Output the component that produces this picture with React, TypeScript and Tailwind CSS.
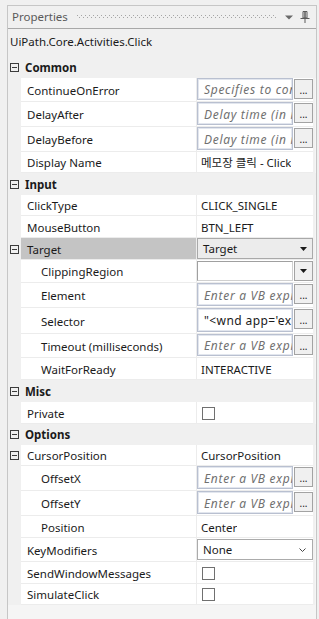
import type { ReactNode } from 'react'

const FONT = "font-['Noto_Sans','Noto_Sans_CJK_KR',sans-serif]"

function Expander() {
  return (
    <span className="relative block w-[9px] h-[9px] border border-[#3c3c3c]">
      <span className="absolute left-[1px] right-[1px] top-[3px] h-px bg-[#3c3c3c]" />
    </span>
  )
}

function Category({ label, h }: { label: string; h: string }) {
  return (
    <div className={`flex items-center bg-[#f0f0f0] ${h}`}>
      <div className="w-[13px] shrink-0 flex items-center justify-center">
        <Expander />
      </div>
      <span className="pl-[4px] pt-[1px] font-bold text-[#1a1a1a]">{label}</span>
    </div>
  )
}

type PropProps = {
  name: string
  h: string
  indent?: boolean
  expander?: boolean
  highlight?: boolean
  children?: ReactNode
}

function Prop({ name, h, indent, expander, highlight, children }: PropProps) {
  return (
    <div className={`flex ${h}`}>
      <div className="w-[13px] shrink-0 bg-[#f0f0f0] flex items-center justify-center">
        {expander && <Expander />}
      </div>
      <div
        className={`w-[175px] shrink-0 border-b border-[#ececec] flex items-center pt-[2px] overflow-hidden whitespace-nowrap ${
          indent ? 'pl-[20px]' : 'pl-[6px]'
        } ${highlight ? 'bg-[#c4c4c4]' : 'bg-white'}`}
      >
        {name}
      </div>
      <div className="w-[117px] shrink-0 bg-white border-b border-l border-[#ececec] flex items-stretch">
        {children}
      </div>
      <div className="w-[2px] shrink-0 bg-[#f0f0f0]" />
    </div>
  )
}

function Text({ children }: { children: ReactNode }) {
  return (
    <div className="flex items-center pl-[4px] pt-[2px] whitespace-nowrap overflow-hidden text-[#1a1a1a]">
      {children}
    </div>
  )
}

// editors only show the part of the text that fits, as in the grid
function Editor({ placeholder, value }: { placeholder?: string; value?: string }) {
  return (
    <div className="flex w-full pb-[1px]">
      <div
        className={`w-[96px] shrink-0 border border-[#b9c0d0] shadow-[inset_0_0_0_1px_#e2e6ee] bg-white flex items-center pl-[6px] pt-[2px] overflow-hidden whitespace-nowrap text-[12px] ${
          value ? 'text-[#1a1a1a] tracking-[0.4px]' : 'italic text-[#707070] tracking-[0.7px]'
        }`}
      >
        {value ?? placeholder}
      </div>
      <DotsButton />
    </div>
  )
}

function DotsButton() {
  return (
    <div className="ml-[1px] mt-[1px] w-[20px] h-[20px] border border-[#a3a3a3] bg-[#f0f0f0] flex items-end justify-center pb-[3px]">
      <span className="block text-[10px] leading-none text-[#222]">...</span>
    </div>
  )
}

function Triangle() {
  return (
    <svg width="7" height="4" viewBox="0 0 7 4">
      <path d="M0 0H7L3.5 4Z" fill="#1a1a1a" />
    </svg>
  )
}

function Checkbox() {
  return (
    <div className="flex items-center pl-[5px] pt-[1px]">
      <div className="w-[13px] h-[13px] border border-[#707070] bg-white" />
    </div>
  )
}

export default function App() {
  return (
    <div className={`w-[319px] h-[619px] bg-[#f0f0f0] pt-[5px] pl-[7px] text-[11.5px] ${FONT}`}>
      <div className="w-[310px] h-[614px] flex flex-col border-x border-t border-[#c6c6c6]">
        {/* title bar */}
        <div className="h-[22px] shrink-0 flex items-center pl-[4px] pr-[6px] text-[#5a5a5a]">
          <span className="leading-none">Properties</span>
          <svg className="ml-[9px] flex-1" height="5">
            <defs>
              <pattern id="grip" width="4" height="4" patternUnits="userSpaceOnUse">
                <rect x="0" y="0" width="1" height="1" fill="#a6a6a6" />
                <rect x="2" y="2" width="1" height="1" fill="#a6a6a6" />
              </pattern>
            </defs>
            <rect x="0" y="0" width="100%" height="4" fill="url(#grip)" />
          </svg>
          <svg className="ml-[8px]" width="8" height="5" viewBox="0 0 8 5">
            <path d="M0 0.5H8L4 4.5Z" fill="#6a6a6a" />
          </svg>
          <svg className="ml-[7px]" width="10" height="12" viewBox="0 0 10 12">
            <path d="M3 0.5H7V7H3Z" fill="none" stroke="#5a5a5a" />
            <path d="M5 1V7" stroke="#5a5a5a" strokeWidth="1.5" />
            <path d="M0.5 7.5H9.5" stroke="#5a5a5a" />
            <path d="M5 8V12" stroke="#5a5a5a" />
          </svg>
        </div>

        {/* grid box */}
        <div className="flex-1 flex flex-col border-t border-[#a8a8a8] bg-[#f5f5f5] text-[#1a1a1a]">
          <div className="h-[27px] shrink-0 bg-[#f0f0f0] pl-[2px] pt-[4px] leading-[17px]">
            UiPath.Core.Activities.Click
          </div>

          <Category label="Common" h="h-[22px]" />
          <Prop name="ContinueOnError" h="h-[24px]">
            <Editor placeholder="Specifies to con" />
          </Prop>
          <Prop name="DelayAfter" h="h-[25px]">
            <Editor placeholder="Delay time (in m" />
          </Prop>
          <Prop name="DelayBefore" h="h-[25px]">
            <Editor placeholder="Delay time (in m" />
          </Prop>
          <Prop name="Display Name" h="h-[21px]">
            <Text>메모장 클릭 - Click</Text>
          </Prop>

          <Category label="Input" h="h-[22px]" />
          <Prop name="ClickType" h="h-[21px]">
            <Text>CLICK_SINGLE</Text>
          </Prop>
          <Prop name="MouseButton" h="h-[22px]">
            <Text>BTN_LEFT</Text>
          </Prop>
          <Prop name="Target" h="h-[22px]" expander highlight>
            <div className="flex w-full border border-[#a9a9a9] bg-[#ececec] items-center justify-between pl-[5px] pr-[5px] pt-[1px]">
              <span>Target</span>
              <Triangle />
            </div>
          </Prop>
          <Prop name="ClippingRegion" h="h-[23px]" indent>
            <div className="flex w-full pt-[1px] pb-[1px]">
              <div className="w-[96px] shrink-0 border border-[#a0a0a0] border-r-[#d0d0d0] border-b-[#d0d0d0] bg-white" />
              <div className="ml-[1px] w-[20px] border border-[#a3a3a3] bg-[#f0f0f0] flex items-center justify-center">
                <Triangle />
              </div>
            </div>
          </Prop>
          <Prop name="Element" h="h-[25px]" indent>
            <Editor placeholder="Enter a VB expr" />
          </Prop>
          <Prop name="Selector" h="h-[26px]" indent>
            <Editor value={`"<wnd app='ex`} />
          </Prop>
          <Prop name="Timeout (milliseconds)" h="h-[24px]" indent>
            <Editor placeholder="Enter a VB expr" />
          </Prop>
          <Prop name="WaitForReady" h="h-[22px]" indent>
            <Text>INTERACTIVE</Text>
          </Prop>

          <Category label="Misc" h="h-[22px]" />
          <Prop name="Private" h="h-[22px]">
            <Checkbox />
          </Prop>

          <Category label="Options" h="h-[21px]" />
          <Prop name="CursorPosition" h="h-[21px]" expander>
            <Text>CursorPosition</Text>
          </Prop>
          <Prop name="OffsetX" h="h-[25px]" indent>
            <Editor placeholder="Enter a VB expr" />
          </Prop>
          <Prop name="OffsetY" h="h-[25px]" indent>
            <Editor placeholder="Enter a VB expr" />
          </Prop>
          <Prop name="Position" h="h-[22px]" indent>
            <Text>Center</Text>
          </Prop>
          <Prop name="KeyModifiers" h="h-[24px]">
            <div className="flex w-full pt-[1px] pb-[1px]">
              <div className="flex w-full border border-[#ababab] bg-white items-center justify-between pl-[5px] pr-[6px] pt-[1px]">
                <span>None</span>
                <svg width="7" height="5" viewBox="0 0 7 5">
                  <path d="M0.5 0.5L3.5 3.5L6.5 0.5" fill="none" stroke="#444" />
                </svg>
              </div>
            </div>
          </Prop>
          <Prop name="SendWindowMessages" h="h-[22px]">
            <Checkbox />
          </Prop>
          <Prop name="SimulateClick" h="h-[21px]">
            <Checkbox />
          </Prop>
        </div>
      </div>
    </div>
  )
}
